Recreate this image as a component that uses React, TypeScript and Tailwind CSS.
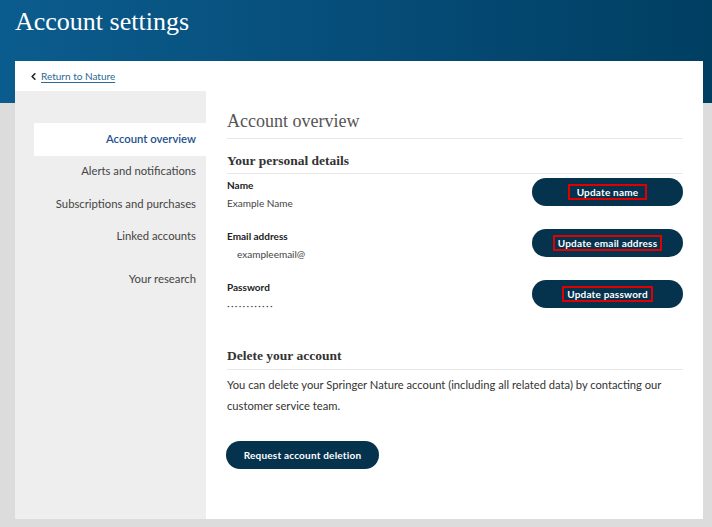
import { ChevronLeft } from "lucide-react";

const NAV_ITEMS = [
  { label: "Account overview", active: true },
  { label: "Alerts and notifications" },
  { label: "Subscriptions and purchases" },
  { label: "Linked accounts" },
];

const DETAILS = [
  { label: "Name", value: "Example Name", button: "Update name", pad: "px-[7px]", extra: "" },
  { label: "Email address", value: "exampleemail@", button: "Update email address", pad: "px-[3px]", extra: "pl-[10px]" },
  { label: "Password", value: "············", button: "Update password", pad: "px-[3px]", extra: "tracking-[1.3px]" },
];

const sans = "font-['Lato','Liberation_Sans',sans-serif]";
const serif = "font-['Liberation_Serif',serif]";

export default function App() {
  return (
    <div className={`min-h-[527px] w-[712px] bg-[#dcdcdc] ${sans}`}>
      {/* Header */}
      <div className="h-[103px] bg-[linear-gradient(90deg,#0b5c8e_0%,#064d79_50%,#003f62_100%)] px-[15px] pt-[5px]">
        <h1 className={`${serif} text-[26px] leading-[34px] text-white`}>Account settings</h1>
      </div>

      {/* Card */}
      <div className="-mt-[42px] ml-[15px] flex h-[458px] w-[688px] flex-col bg-white">
        <div className="flex h-[30px] items-center pl-[13px]">
          <ChevronLeft size={11} strokeWidth={3.5} className="text-[#222]" />
          <a href="#" className="ml-[2px] text-[10px] text-[#2a6a94] underline underline-offset-2">
            Return to Nature
          </a>
        </div>

        <div className="flex flex-1">
          {/* Sidebar */}
          <nav className="w-[191px] bg-[#eeeeee] pt-[32px] pl-[19px]">
            {NAV_ITEMS.map((item) => (
              <div
                key={item.label}
                className={`flex h-[32.5px] items-center justify-end pr-[10px] text-[11.3px] ${
                  item.active ? "bg-white font-semibold text-[#22508c]" : "text-[#444]"
                }`}
              >
                {item.label}
              </div>
            ))}
            <div className="mt-[10px] flex h-[32.5px] items-center justify-end pr-[10px] text-[11.3px] text-[#444]">
              Your research
            </div>
          </nav>

          {/* Main */}
          <main className="flex-1 pl-[21px] pr-[20px] pt-[18px]">
            <h2 className={`${serif} border-b border-[#e8e8e8] pb-[5px] text-[18px] leading-[24px] text-[#555]`}>
              Account overview
            </h2>

            <h3 className={`${serif} mt-[13px] border-b border-[#e8e8e8] pb-[3px] text-[13.5px] font-bold leading-[18px] text-[#333]`}>
              Your personal details
            </h3>

            <div className="mt-[4px] flex flex-col">
              {DETAILS.map((d) => (
                <div key={d.label} className="flex h-[51px] items-start justify-between">
                  <div>
                    <div className="text-[10px] font-bold leading-[14px] text-[#222]">{d.label}</div>
                    <div className={`mt-[4px] text-[10px] leading-[14px] text-[#444] ${d.extra}`}>{d.value}</div>
                  </div>
                  <button className="flex h-[28px] w-[151px] items-center justify-center rounded-full bg-[#05324d] text-[10px] font-bold tracking-[0.02em] text-white">
                    <span className={`border-2 border-[#e00000] ${d.pad} leading-[12px]`}>{d.button}</span>
                  </button>
                </div>
              ))}
            </div>

            <h3 className={`${serif} mt-[16px] border-b border-[#e8e8e8] pb-[4px] text-[13.5px] font-bold leading-[18px] text-[#333]`}>
              Delete your account
            </h3>
            <p className="mt-[4px] text-[11.2px] leading-[21px] text-[#333]">
              You can delete your Springer Nature account (including all related data) by contacting our customer service team.
            </p>

            <button className="mt-[25px] -ml-[1px] h-[28px] w-[153px] rounded-full bg-[#05324d] text-[10px] font-bold tracking-[0.02em] text-white">
              Request account deletion
            </button>
          </main>
        </div>
      </div>
    </div>
  );
}
